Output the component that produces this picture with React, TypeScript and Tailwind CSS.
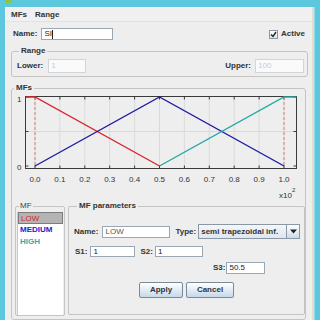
import React from 'react';

const ticks = [0, 0.1, 0.2, 0.3, 0.4, 0.5, 0.6, 0.7, 0.8, 0.9, 1.0];
const px = (u: number) => 34 + u * 249;
const py = (v: number) => 165 - v * 69;

function MfChart() {
  return (
    <svg width={293} height={108} viewBox="11 92 293 108" className="block">
      {/* grid */}
      {ticks.map((t) => (
        <line key={`g${t}`} x1={px(t)} x2={px(t)} y1={95.5} y2={167.5} stroke="#dadada" strokeWidth={1} />
      ))}
      <line x1={24.5} x2={295.5} y1={130.5} y2={130.5} stroke="#dadada" strokeWidth={1} />
      {/* frame */}
      <rect x={24.5} y={95.5} width={271} height={72} fill="none" stroke="#3a3a3a" strokeWidth={1} />
      {ticks.map((t) => (
        <g key={`t${t}`} stroke="#3a3a3a" strokeWidth={1}>
          <line x1={px(t)} x2={px(t)} y1={95.5} y2={98.5} />
          <line x1={px(t)} x2={px(t)} y1={164.5} y2={167.5} />
        </g>
      ))}
      {[96, 130.5, 165].map((y) => (
        <g key={`y${y}`} stroke="#3a3a3a" strokeWidth={1}>
          <line x1={24.5} x2={27.5} y1={y} y2={y} />
          <line x1={292.5} x2={295.5} y1={y} y2={y} />
        </g>
      ))}
      {/* dashed limits */}
      <line x1={px(0)} x2={px(0)} y1={py(1)} y2={py(0)} stroke="#e07a7a" strokeWidth={1} strokeDasharray="3 2" />
      <line x1={px(1)} x2={px(1)} y1={py(1)} y2={py(0)} stroke="#e07a7a" strokeWidth={1} strokeDasharray="3 2" />
      {/* membership functions */}
      <polyline points={`24.5,${py(1)} ${px(0)},${py(1)} ${px(0.5)},${py(0)}`} fill="none" stroke="#d8252b" strokeWidth={1.4} />
      <polyline points={`${px(0)},${py(0)} ${px(0.5)},${py(1)} ${px(1)},${py(0)}`} fill="none" stroke="#1b1ba0" strokeWidth={1.4} />
      <polyline points={`${px(0.5)},${py(0)} ${px(1)},${py(1)} 295.5,${py(1)}`} fill="none" stroke="#22a8a2" strokeWidth={1.4} />
      {/* labels */}
      <g fontFamily="'Liberation Sans', Arial, sans-serif" fontSize={8} fontWeight={400} fill="#333">
        <text x={16} y={101}>1</text>
        <text x={16} y={169}>0</text>
        {ticks.map((t) => (
          <text key={`l${t}`} x={px(t)} y={181} textAnchor="middle">
            {t.toFixed(1)}
          </text>
        ))}
        <text x={278} y={197}>x10</text>
        <text x={291} y={191} fontSize={6}>2</text>
      </g>
    </svg>
  );
}

export default function App() {
  return (
    <div className="w-[320px] h-[320px] overflow-hidden flex flex-col bg-[#5cc8dd] font-['Liberation_Sans',Arial,sans-serif] text-[8px] leading-[10px] font-bold text-[#333]">
      {/* title bar strip */}
      <div className="h-[7px] shrink-0 flex">
        <div className="ml-[5px] w-[7px] h-[3px] bg-[#8cc63f] rounded-b-[1px]" />
      </div>

      <div className="flex flex-1 min-h-0">
        <div className="w-[5px] shrink-0 bg-[#5cc8dd]" />

        {/* window content */}
        <div className="flex-1 flex flex-col bg-[#eeeeee] border-l border-t border-[#f8f8f8]">
          {/* menu bar */}
          <div className="h-[14px] shrink-0 flex items-center gap-[8px] pl-[5px] bg-[#f0f0f0] border-b border-[#e2e2e2]">
            <span>MFs</span>
            <span>Range</span>
          </div>

          {/* name row */}
          <div className="mt-[6px] h-[12px] flex items-center pl-[7px] pr-[7px]">
            <span>Name:</span>
            <div className="ml-[4px] w-[72px] h-[12px] bg-white border border-[#9aa7b4] flex items-center pl-[2px] font-normal text-[#222]">
              SI<span className="w-px h-[9px] bg-[#222]" />
            </div>
            <div className="flex-1" />
            <div className="w-[9px] h-[9px] border border-[#8a98a6] bg-gradient-to-b from-white to-[#dce4ec] flex items-center justify-center">
              <svg width="7" height="7" viewBox="0 0 7 7">
                <path d="M1 3.5 L3 5.5 L6 1" fill="none" stroke="#222" strokeWidth={1.4} />
              </svg>
            </div>
            <span className="ml-[3px]">Active</span>
          </div>

          {/* Range group */}
          <fieldset className="mt-[6px] ml-[5px] mr-[4px] border border-[#c4c4c4] rounded-[3px] pt-[3px] pb-[3px] pl-[5px] pr-[3px] flex items-center">
            <legend className="ml-[2px] px-[2px]">Range</legend>
            <div className="flex items-center w-full">
              <span>Lower:</span>
              <div className="ml-[5px] w-[38px] h-[14px] bg-[#fafafa] border border-[#d2d6da] flex items-center pl-[2px] font-normal text-[#c2ccd6]">1</div>
              <div className="flex-1" />
              <span>Upper:</span>
              <div className="ml-[4px] w-[49px] h-[14px] bg-[#fafafa] border border-[#d2d6da] flex items-center pl-[2px] font-normal text-[#c2ccd6]">100</div>
            </div>
          </fieldset>

          {/* MFs group */}
          <fieldset className="mt-[6px] ml-[5px] mr-[6px] flex-1 border border-[#c4c4c4] rounded-[3px] pb-[1px]">
            <legend className="ml-[2px] px-[2px]">MFs</legend>
            <MfChart />

            <div className="flex ml-[3px] gap-[3px]">
              {/* MF list */}
              <fieldset className="w-[50px] h-[115px] border border-[#c4c4c4] rounded-[2px] px-[1px]">
                <legend className="ml-[2px] px-[1px] font-normal text-[#444]">MF</legend>
                <div className="mt-[1px] h-[103px] bg-white border-l border-[#c8c8c8]">
                  <div className="h-[12px] leading-[12px] pl-[2px] bg-[#b4b4b4] border border-[#7c7c7c] text-[#e02020] font-normal">LOW</div>
                  <div className="h-[12px] leading-[12px] pl-[2px] text-[#2323c8]">MEDIUM</div>
                  <div className="h-[12px] leading-[12px] pl-[2px] text-[#1fb0b0]">HIGH</div>
                </div>
              </fieldset>

              {/* MF parameters */}
              <fieldset className="flex-1 h-[114px] border border-[#c4c4c4] rounded-[2px] pl-[5px]">
                <legend className="ml-[3px] px-[2px]">MF parameters</legend>
                <div className="mt-[13px] h-[15px] flex items-center">
                  <span>Name:</span>
                  <div className="ml-[4px] w-[68px] h-[12px] bg-white border border-[#9aa7b4] flex items-center pl-[2px] font-normal text-[#555]">LOW</div>
                  <span className="ml-[5px]">Type:</span>
                  <div className="ml-[2px] w-[102px] h-[15px] border border-[#8a98a6] flex">
                    <div className="flex-1 flex items-center pl-[2px] bg-gradient-to-b from-[#f4f7fa] to-[#dfe6ee] border-r border-[#8a98a6]">semi trapezoidal inf.</div>
                    <div className="w-[12px] flex items-center justify-center bg-gradient-to-b from-white to-[#ccdae8]">
                      <svg width="7" height="5" viewBox="0 0 7 5">
                        <path d="M0 0.5 H7 L3.5 4.5 Z" fill="#222" />
                      </svg>
                    </div>
                  </div>
                </div>
                <div className="mt-[7px] h-[11px] flex items-center">
                  <span className="ml-[1px]">S1:</span>
                  <div className="ml-[3px] w-[45px] h-[11px] bg-white border border-[#9aa7b4] flex items-center pl-[2px] font-normal text-[#222]">1</div>
                  <span className="ml-[5px]">S2:</span>
                  <div className="ml-[2px] w-[48px] h-[11px] bg-white border border-[#9aa7b4] flex items-center pl-[2px] font-normal text-[#222]">1</div>
                </div>
                <div className="mt-[5px] h-[12px] flex items-center">
                  <span className="ml-[139px]">S3:</span>
                  <div className="ml-[1px] w-[39px] h-[12px] bg-white border border-[#9aa7b4] flex items-center pl-[2px] font-normal text-[#222]">50.5</div>
                </div>
                <div className="mt-[8px] h-[16px] flex">
                  <button className="ml-[65px] w-[44px] h-[16px] border border-[#7a8a99] rounded-[2px] bg-gradient-to-b from-white to-[#c6d8ea]">Apply</button>
                  <button className="ml-[3px] w-[48px] h-[16px] border border-[#7a8a99] rounded-[2px] bg-gradient-to-b from-white to-[#c6d8ea]">Cancel</button>
                </div>
              </fieldset>
            </div>
          </fieldset>
        </div>

        <div className="w-[2px] shrink-0 bg-[#e4dccc]" />
        <div className="w-[8px] shrink-0 bg-[#5cc8dd] border-l border-[#8fdcea]" />
      </div>
    </div>
  );
}
